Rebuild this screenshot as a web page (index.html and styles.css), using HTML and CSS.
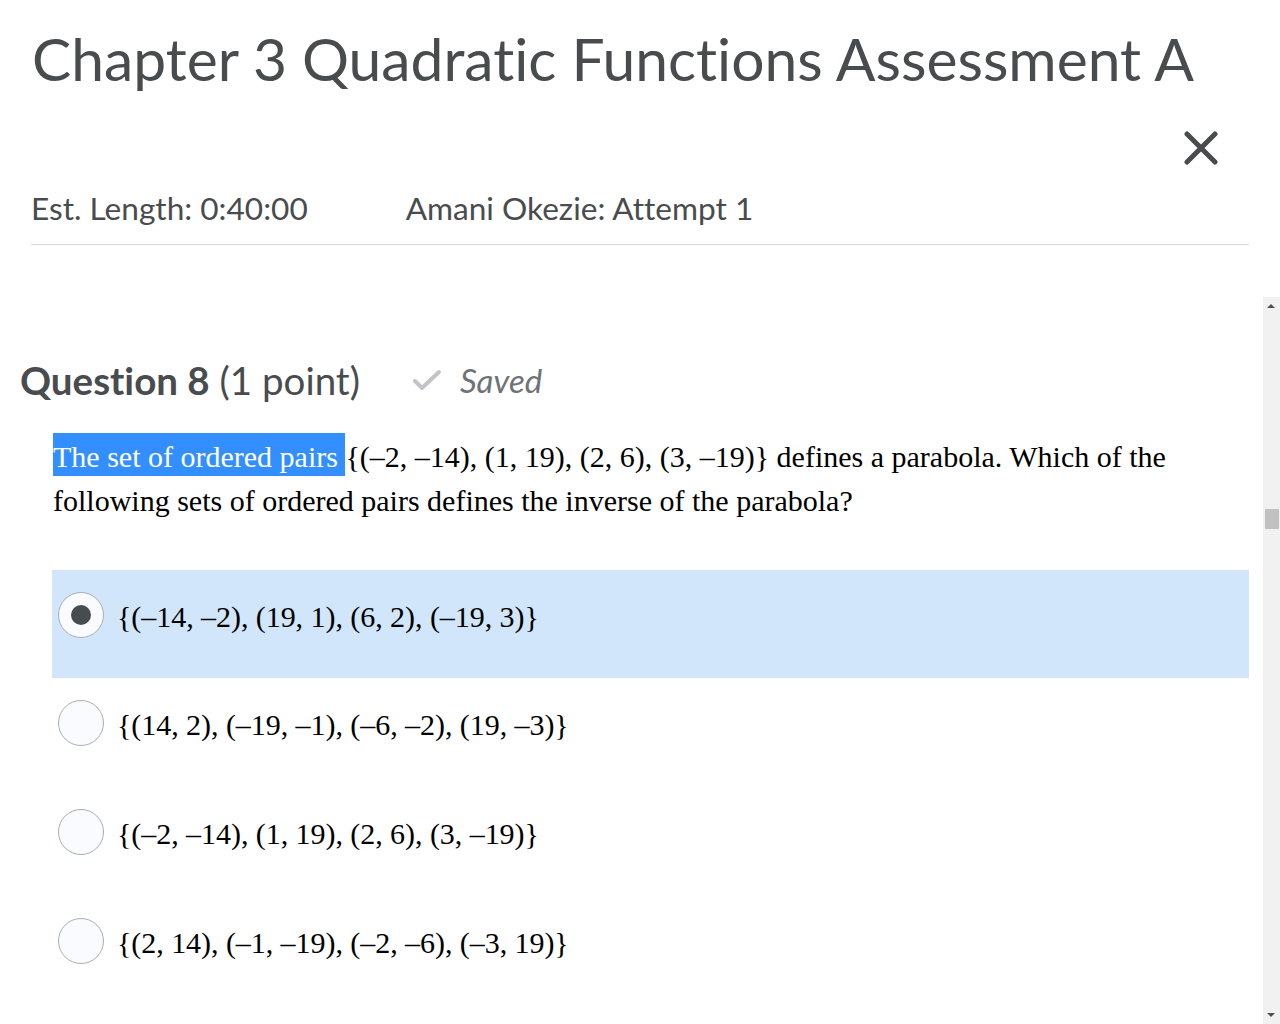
FILE: index.html
```html
<html>
    <head>
        <meta charset="UTF-8" />
        <link rel="stylesheet" href="styles.css">
    </head>
    <body>
        <div class="quiz_header">
            <h1 class="title">Chapter 3 Quadratic Functions Assessment A</h1>
            <div class="close_row">
                <a href="javascript:;" class="close" aria-label="Close">
                    <svg width="34" height="34" viewBox="0 0 34 34">
                        <path d="M3 3 L31 31 M31 3 L3 31" stroke="#494c4e" stroke-width="5" stroke-linecap="round" fill="none" />
                    </svg>
                </a>
            </div>
            <div class="meta">
                <span class="meta_item">Est. Length: 0:40:00</span>
                <span class="meta_item">Amani Okezie: Attempt 1</span>
            </div>
        </div>

        <div class="question">
            <div class="question_head">
                <h2><b>Question 8</b> (1 point)</h2>
                <span class="saved">
                    <svg width="30" height="22" viewBox="0 0 30 22">
                        <path d="M3 12 L10 19 L27 3" stroke="#c1c5c9" stroke-width="4" stroke-linecap="round" stroke-linejoin="round" fill="none" />
                    </svg>
                    <i>Saved</i>
                </span>
            </div>
            <p class="prompt"><span class="selected_text">The set of ordered pairs </span>{(&ndash;2, &ndash;14), (1, 19), (2, 6), (3, &ndash;19)} defines a parabola. Which of the following sets of ordered pairs defines the inverse of the parabola?</p>

            <div class="answers">
                <label class="answer checked">
                    <span class="radio"><span class="dot"></span></span>
                    <span class="answer_text">{(&ndash;14, &ndash;2), (19, 1), (6, 2), (&ndash;19, 3)}</span>
                </label>
                <label class="answer">
                    <span class="radio"></span>
                    <span class="answer_text">{(14, 2), (&ndash;19, &ndash;1), (&ndash;6, &ndash;2), (19, &ndash;3)}</span>
                </label>
                <label class="answer">
                    <span class="radio"></span>
                    <span class="answer_text">{(&ndash;2, &ndash;14), (1, 19), (2, 6), (3, &ndash;19)}</span>
                </label>
                <label class="answer">
                    <span class="radio"></span>
                    <span class="answer_text">{(2, 14), (&ndash;1, &ndash;19), (&ndash;2, &ndash;6), (&ndash;3, 19)}</span>
                </label>
            </div>
        </div>

        <div class="scrollbar">
            <span class="arrow up"></span>
            <span class="thumb"></span>
            <span class="arrow down"></span>
        </div>
    </body>
</html>
```

FILE: styles.css
```css
* {
    box-sizing: border-box;
}
body {
    margin: 0;
    font-family: Lato, "Noto Sans", sans-serif;
    font-variant-ligatures: none;
    color: #494c4e;
    background: #fff;
    overflow: hidden;
}

.quiz_header {
    margin: 0 31px;
    padding-top: 23px;
    padding-bottom: 17px;
    border-bottom: 1px solid #d3d9de;
}

.title {
    margin: 0;
    padding-left: 1px;
    font-size: 58.75px;
    font-weight: 400;
    line-height: 72px;
}

.close_row {
    display: flex;
    justify-content: flex-end;
    margin-top: 36px;
    padding-right: 31px;
}

.close {
    display: block;
    width: 34px;
    height: 34px;
}

.close svg {
    display: block;
}

.meta {
    display: flex;
    gap: 98px;
    margin-top: 25px;
    font-size: 31.6px;
    line-height: 37px;
}

.question {
    padding-top: 112px;
}

.question_head {
    display: flex;
    align-items: center;
    gap: 52px;
    padding-left: 20px;
}

.question_head h2 {
    margin: 0;
    font-size: 38.5px;
    font-weight: 400;
    line-height: 46px;
}

.question_head b {
    font-weight: 700;
}

.saved {
    display: flex;
    align-items: center;
    gap: 18px;
    font-size: 33px;
    color: #6e7377;
}

.saved svg {
    display: block;
}

.prompt {
    margin: 32px 31px 0 53px;
    font-family: "Liberation Serif", "Times New Roman", serif;
    font-size: 30px;
    line-height: 44px;
    color: #000;
}

.selected_text {
    background: #338fff;
    color: #fff;
    box-shadow: 0 -7px 0 #338fff, 0 3px 0 #338fff;
}

.answers {
    margin: 47px 31px 0 52px;
}

.answer {
    display: flex;
    align-items: flex-start;
    gap: 13px;
    height: 109px;
    padding: 22px 0 0 6px;
    font-family: "Liberation Serif", "Times New Roman", serif;
    font-size: 30px;
    line-height: 44px;
    color: #000;
}

.answer.checked {
    background: #d1e6fa;
    height: 108px;
}

.radio {
    display: flex;
    align-items: center;
    justify-content: center;
    flex: none;
    width: 46px;
    height: 46px;
    border: 1px solid #a9aeb2;
    border-radius: 50%;
    background: #f9fbff;
}

.dot {
    width: 20px;
    height: 20px;
    border-radius: 50%;
    background: #494c4e;
}

.answer_text {
    margin-top: 3px;
    letter-spacing: -0.05px;
}

.scrollbar {
    position: absolute;
    top: 297px;
    right: 0;
    width: 17px;
    height: 727px;
    background: #f1f1f1;
}

.arrow {
    position: absolute;
    left: 4px;
    width: 0;
    height: 0;
    border-left: 4px solid transparent;
    border-right: 4px solid transparent;
}

.arrow.up {
    top: 7px;
    border-bottom: 4px solid #505050;
}

.arrow.down {
    bottom: 7px;
    border-top: 4px solid #505050;
}

.thumb {
    position: absolute;
    top: 212px;
    left: 2px;
    width: 14px;
    height: 20px;
    background: #c1c1c1;
}
```
